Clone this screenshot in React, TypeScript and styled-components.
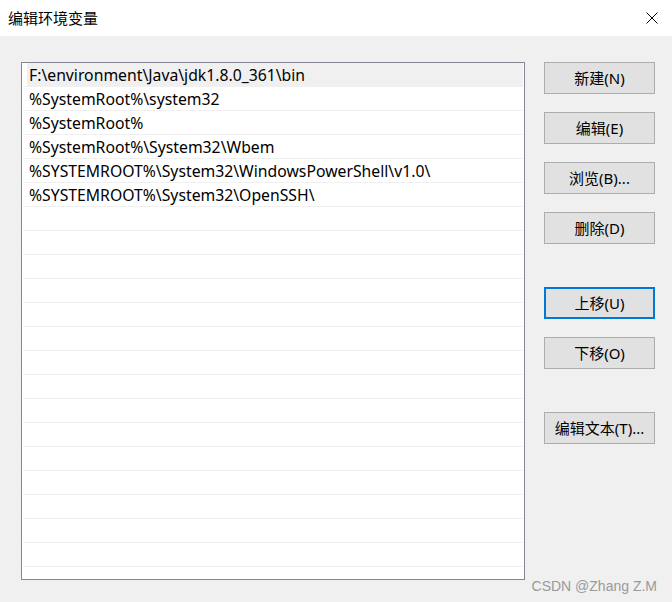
import styled, { createGlobalStyle } from 'styled-components'

const GlobalStyle = createGlobalStyle`
  html, body {
    margin: 0;
    padding: 0;
    background: #f0f0f0;
  }
  body {
    font-family: "Noto Sans", "Noto Sans CJK SC", sans-serif;
    color: #000;
  }
`

const Window = styled.div`
  width: 672px;
  height: 602px;
  display: flex;
  flex-direction: column;
  background: #f0f0f0;
  position: relative;
  overflow: hidden;
`

const TitleBar = styled.header`
  height: 36px;
  flex: none;
  background: #fff;
  display: flex;
  align-items: center;
  justify-content: space-between;
  padding: 0 14px 0 8px;
  box-sizing: border-box;
`

const Title = styled.div`
  font-family: "Noto Sans CJK SC", sans-serif;
  font-size: 15px;
  line-height: 1;
  margin-top: -1px;
`

const CloseIcon = styled.svg`
  width: 12px;
  height: 12px;
  display: block;
`

const Body = styled.div`
  display: flex;
  gap: 19px;
  padding: 26px 0 0 21px;
`

const ListBox = styled.div`
  width: 504px;
  height: 518px;
  box-sizing: border-box;
  border: 1px solid #828790;
  background: #fff;
  padding: 0 1px;
  overflow: hidden;
`

const Row = styled.div<{ $selected?: boolean }>`
  height: 24px;
  box-sizing: border-box;
  border-bottom: 1px solid #f0f0f0;
  padding-left: 6px;
  font-size: 15.75px;
  line-height: 24px;
  white-space: nowrap;
  background: ${p => (p.$selected ? '#f0f0f0' : '#fff')};
  box-shadow: ${p => (p.$selected ? 'inset 4px 0 0 #fff' : 'none')};
`

const Buttons = styled.div`
  display: flex;
  flex-direction: column;
  width: 111px;
`

const Button = styled.button<{ $focused?: boolean; $space: number }>`
  height: 32px;
  width: 111px;
  margin-top: ${p => p.$space}px;
  box-sizing: border-box;
  background: #e1e1e1;
  border: ${p => (p.$focused ? '2px solid #0078d7' : '1px solid #adadad')};
  font-family: "Noto Sans", "Noto Sans CJK SC", sans-serif;
  font-size: 15px;
  color: #000;
  padding: 0 0 1px;
  display: flex;
  align-items: center;
  justify-content: center;
`

const Watermark = styled.div`
  position: absolute;
  right: 15px;
  bottom: 8px;
  font-family: "Liberation Sans", sans-serif;
  font-size: 14px;
  color: #9a9a9a;
`

const paths = [
  'F:\\environment\\Java\\jdk1.8.0_361\\bin',
  '%SystemRoot%\\system32',
  '%SystemRoot%',
  '%SystemRoot%\\System32\\Wbem',
  '%SYSTEMROOT%\\System32\\WindowsPowerShell\\v1.0\\',
  '%SYSTEMROOT%\\System32\\OpenSSH\\',
]

const rows = Array.from({ length: 22 }, (_, i) => paths[i] ?? '')

const actions = [
  { label: '新建(N)', space: 0 },
  { label: '编辑(E)', space: 18 },
  { label: '浏览(B)...', space: 18 },
  { label: '删除(D)', space: 18 },
  { label: '上移(U)', space: 43, focused: true },
  { label: '下移(O)', space: 18 },
  { label: '编辑文本(T)...', space: 43 },
]

export default function App() {
  return (
    <>
      <GlobalStyle />
      <Window>
        <TitleBar>
          <Title>编辑环境变量</Title>
          <CloseIcon viewBox="0 0 12 12">
            <path d="M0.5 0.5 L11.5 11.5 M11.5 0.5 L0.5 11.5" stroke="#000" strokeWidth="1" />
          </CloseIcon>
        </TitleBar>
        <Body>
          <ListBox>
            {rows.map((text, i) => (
              <Row key={i} $selected={i === 0}>
                {text}
              </Row>
            ))}
          </ListBox>
          <Buttons>
            {actions.map(a => (
              <Button key={a.label} $space={a.space} $focused={a.focused}>
                {a.label}
              </Button>
            ))}
          </Buttons>
        </Body>
        <Watermark>CSDN @Zhang Z.M</Watermark>
      </Window>
    </>
  )
}
